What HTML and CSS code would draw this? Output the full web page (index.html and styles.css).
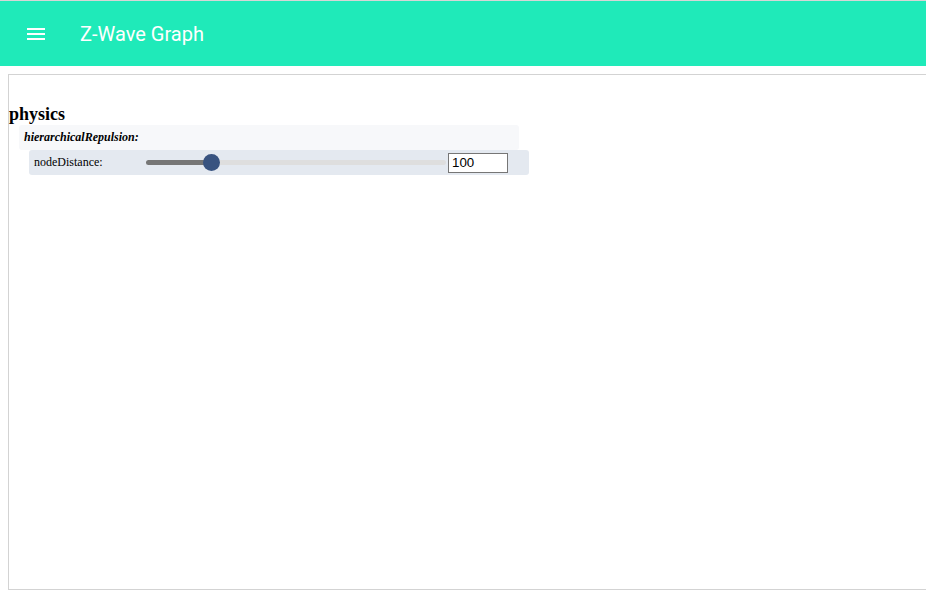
FILE: index.html
```html
<!DOCTYPE html>
<html>
<head>
<meta charset="utf-8">
<title>Z-Wave Graph</title>
<link rel="stylesheet" href="styles.css">
</head>
<body>
<div class="topline"></div>
<header class="toolbar">
  <button class="menu-btn" aria-label="menu">
    <svg viewBox="0 0 24 24" width="24" height="24"><path d="M3 18h18v-2H3v2zm0-5h18v-2H3v2zm0-7v2h18V6H3z" fill="#fff"/></svg>
  </button>
  <div class="title">Z-Wave Graph</div>
</header>
<main class="content">
  <div class="graph-box">
    <div class="config">
      <div class="config-header">physics</div>
      <div class="config-item s2"><i><b>hierarchicalRepulsion:</b></i></div>
      <div class="config-item s3">
        <div class="config-label">nodeDistance:</div>
        <input class="config-range" type="range" min="0" max="500" step="5" value="100">
        <input class="config-rangeinput" type="text" value="100">
      </div>
    </div>
  </div>
</main>
</body>
</html>
```
FILE: styles.css
```css
html, body {
  margin: 0;
  padding: 0;
  overflow: hidden;
  background: #fff;
  font-family: "Liberation Serif", "Times New Roman", serif;
}
.topline {
  height: 1px;
  background: #d6d6d6;
}
.toolbar {
  height: 65px;
  background: #1feab9;
  display: flex;
  align-items: center;
  padding-left: 16px;
  color: #fff;
}
.menu-btn {
  width: 40px;
  height: 40px;
  padding: 8px;
  margin-top: 1px;
  border: 0;
  background: transparent;
  display: flex;
  align-items: center;
  justify-content: center;
  cursor: pointer;
}
.menu-btn svg {
  display: block;
}
.title {
  margin-left: 24px;
  font-family: Roboto, "Noto Sans", sans-serif;
  font-size: 20px;
  font-weight: 400;
}
.content {
  padding: 8px 0 0 8px;
}
.graph-box {
  width: 940px;
  height: 514px;
  border: 1px solid #d3d3d3;
}
.config {
  padding-top: 29px;
}
.config-header {
  font-size: 18px;
  font-weight: bold;
  line-height: 21px;
  color: #000;
}
.config-item {
  width: 495px;
  height: 25px;
  line-height: 25px;
  font-size: 12px;
  padding-left: 5px;
  border-radius: 3px;
  display: flex;
  align-items: center;
}
.s2 {
  margin-left: 10px;
  background: #f7f8fa;
}
.s3 {
  margin-left: 20px;
  background: #e4e9f0;
}
.config-label {
  width: 110px;
  flex: none;
}
.config-range {
  -webkit-appearance: none;
  appearance: none;
  width: 300px;
  height: 20px;
  margin: 0 2px;
  padding: 0;
  background: transparent;
  border: 0;
}
.config-range::-webkit-slider-runnable-track {
  height: 5px;
  border-radius: 3px;
  background: linear-gradient(to right, #767676 0, #767676 64px, #dedede 64px);
}
.config-range::-webkit-slider-thumb {
  -webkit-appearance: none;
  width: 17px;
  height: 17px;
  border-radius: 50%;
  background: #385380;
  border: 0;
  margin-top: -6px;
}
.config-rangeinput {
  box-sizing: border-box;
  width: 60px;
  height: 20px;
  margin: 0;
  padding: 1px 3px;
  border: 1px solid #767676;
  font-family: "Liberation Sans", Arial, sans-serif;
  font-size: 13.3px;
  color: #000;
  background: #fff;
}
```
